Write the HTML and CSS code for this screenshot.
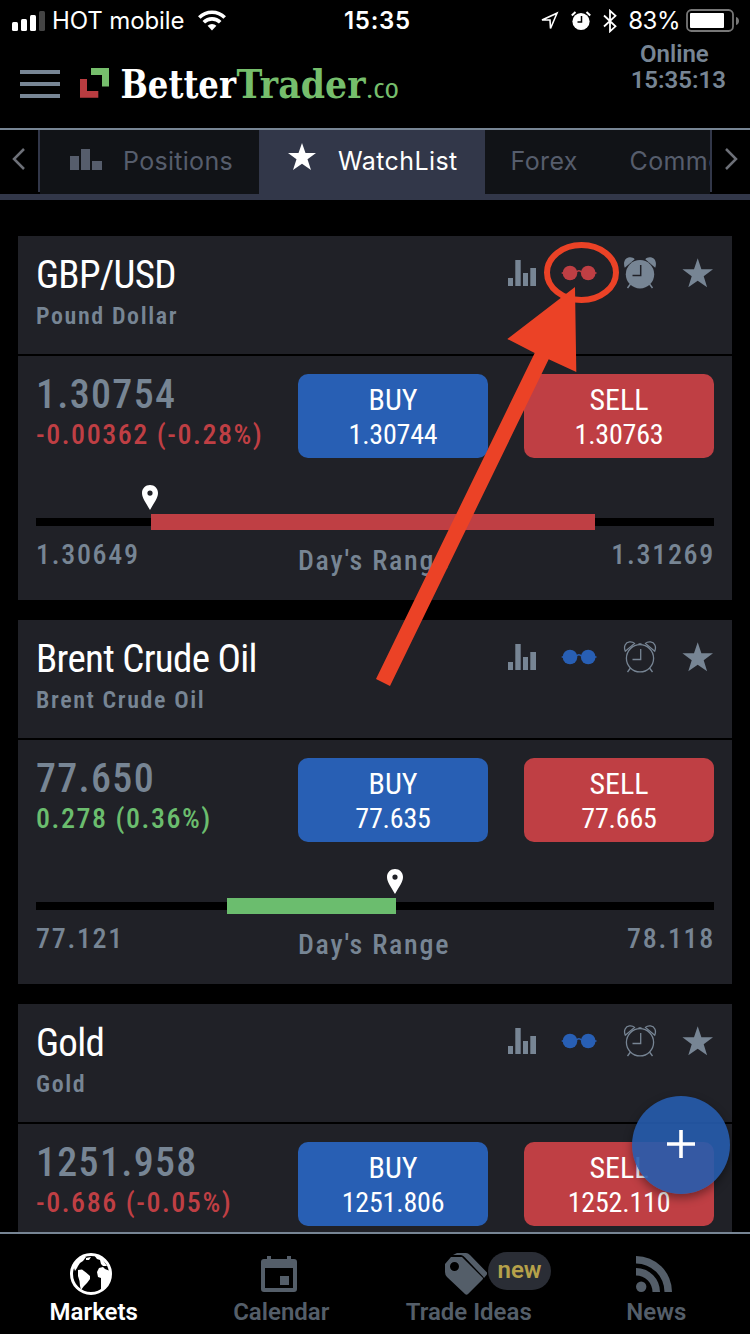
FILE: index.html
```html
<!DOCTYPE html>
<html lang="en">
  <head>
    <meta charset="utf-8">
    <title>BetterTrader.co - WatchList</title>
    <link rel="stylesheet" href="styles.css">
  </head>
  <body>
    <!-- Shared icons -->
    <svg class="defs">
      <symbol id="chart" viewBox="0 0 28 32">
        <path d="M0 21h5v8H0zM7.3 3h5.4v26H7.3zM15 16h5v13h-5zM22.3 11H28v18h-5.7z"/>
      </symbol>
      <symbol id="glasses" viewBox="0 0 36 32">
        <circle cx="9" cy="16" r="7.3"/>
        <circle cx="27.2" cy="16" r="7.3"/>
        <path d="M.7 15.2h3v1.6h-3zM32.5 15.2h3v1.6h-3z"/>
        <path d="M15.2 15.2q2.700-3 5.500 0" fill="none" stroke="currentColor" stroke-width="1.5"/>
      </symbol>
      <symbol id="alarm" viewBox="0 0 34 32">
        <g fill="none" stroke="currentColor" stroke-width="1.3">
          <circle cx="17" cy="17.3" r="13.6"/>
          <path d="M2.3 10.3C.3 5.5 2.5 1.3 6.5.9c2.200-.2 4 .5 5 1.600zM31.7 10.3c2-4.800-.2-9-4.200-9.400-2.200-.2-4 .5-5 1.600z"/>
          <path d="M7.5 27l-3 4M26.5 27l3 4M15.5 3h3"/>
          <path d="M17.7 8v10.5H9.5"/>
        </g>
      </symbol>
      <symbol id="alarm-on" viewBox="0 0 34 32">
        <circle cx="17" cy="17.3" r="14.2"/>
        <path d="M1.8 10.8C-.2 5.500 2 .7 6.500.3c2.200-.2 4 .5 5.200 1.900zM32.2 10.8c2-5.300-.2-10.100-4.700-10.500-2.200-.2-4 .5-5.200 1.900z"/>
        <path d="M7.5 27l-3 4M26.5 27l3 4" stroke="currentColor" stroke-width="1.5"/>
        <path d="M17.7 8v10.5H9.5" fill="none" stroke="#202127" stroke-width="1.5"/>
      </symbol>
      <symbol id="star" viewBox="0 0 32 32">
        <path d="M15.7 1.3l3.700 10.900 11.600.1-9.300 7 3.400 11-9.400-6.600-9.400 6.600 3.400-11-9.300-7 11.600-.1z"/>
      </symbol>
      <symbol id="pin" viewBox="0 0 16 25">
        <path fill-rule="evenodd" d="M8 0c4.500 0 8 3.400 8 8 0 5-4 10-8 17C4 18 0 13 0 8c0-4.600 3.500-8 8-8zm0 5.500a2.600 2.600 0 1 0 0 5.200 2.600 2.600 0 0 0 0-5.200z"/>
      </symbol>
    </svg>

    <div class="statusBar">
      <svg class="signal" width="34" height="20">
        <rect x="0" y="11" width="6" height="9" rx="1.5"/>
        <rect x="9" y="8" width="6" height="12" rx="1.5"/>
        <rect x="18" y="4" width="6" height="16" rx="1.5"/>
        <rect x="27" y="0" width="6" height="20" rx="1.5" fill="#444"/>
      </svg>
      <span class="carrier">HOT mobile</span>
      <svg class="wifi" width="28" height="21" viewBox="0 0 28 21">
        <g fill="none" stroke="#fff" stroke-width="3.6">
          <path d="M1.3 7.5a18 18 0 0 1 25.400 0"/>
          <path d="M5.8 12.3a11.600 11.600 0 0 1 16.400 0"/>
        </g>
        <path d="M14 20.5l-4.400-4.800a6.300 6.300 0 0 1 8.800 0z"/>
      </svg>
      <span class="clock">15:35</span>
      <div class="statusRight">
        <svg width="20" height="20" viewBox="0 0 20 20">
          <path d="M3 9L18 2.2 11.5 17.5 11 9z" fill="none" stroke="#fff" stroke-width="1.6"/>
        </svg>
        <svg width="20" height="20" viewBox="0 0 20 20">
          <circle cx="10" cy="10.5" r="8.6"/>
          <path d="M.8 4.5L4.5 1M19.2 4.5L15.5 1" stroke="#fff" stroke-width="2"/>
          <path d="M10.5 5v6H6.5" fill="none" stroke="#000" stroke-width="1.5"/>
        </svg>
        <svg width="14" height="24" viewBox="0 0 14 24">
          <path d="M1 6.5l11.500 10.800L7 22.300V1.800l5.500 5L1 17.500" fill="none" stroke="#fff" stroke-width="1.8"/>
        </svg>
        <span class="percent">83%</span>
        <svg class="battery" width="54" height="24" viewBox="0 0 54 24">
          <rect x="1" y="1" width="46" height="21" rx="4.5" fill="none" stroke="#777" stroke-width="1.8"/>
          <rect x="4" y="4" width="34" height="15" rx="1"/>
          <path d="M50 8c4 1 4 7 0 8z" fill="#777"/>
        </svg>
      </div>
    </div>

    <div class="header">
      <div class="burger"><i></i><i></i><i></i></div>
      <svg class="logo" width="330" height="50" viewBox="0 0 330 50">
        <path d="M11 4h18v18.5h-7V11H11z" fill="#76be6c"/>
        <path d="M0 15h7v12h11.300v6.700H0z" fill="#b93c40"/>
        <text class="logoName" x="40.5" y="33.5" textLength="115.5" lengthAdjust="spacingAndGlyphs">Better</text>
        <text class="logoName green" x="156.5" y="33.5" textLength="129" lengthAdjust="spacingAndGlyphs">Trader</text>
        <text class="logoCo green" x="286" y="33.5" textLength="33" lengthAdjust="spacingAndGlyphs">.co</text>
      </svg>
      <div class="online">
        <div class="state">Online</div>
        <div>15:35:13</div>
      </div>
    </div>

    <div class="tabs">
      <div class="arrow left">
        <svg width="16" height="24"><path d="M12 2L2 12l10 10"/></svg>
      </div>
      <div class="tabList">
        <div class="tab positions">
          <svg width="32" height="21"><path d="M0 7h9v14H0zM11 0h9v21h-9zM22 12h10v9H22z"/></svg>
          <span>Positions</span>
        </div>
        <div class="tab watchlist active">
          <svg width="28" height="28" viewBox="0 0 28 28"><path d="M14 0l3.500 10H28l-8.500 6.300L23 27l-9-6.300L5 27l3.500-10.700L0 10h10.500z"/></svg>
          <span>WatchList</span>
        </div>
        <div class="tab forex"><span>Forex</span></div>
        <div class="tab"><span>Commodities</span></div>
      </div>
      <div class="arrow right">
        <svg width="16" height="24"><path d="M2 2l10 10L2 22"/></svg>
      </div>
    </div>

    <div class="list">
      <div class="card">
        <div class="cardHead">
          <div>
            <div class="title">GBP/USD</div>
            <div class="subtitle">Pound Dollar</div>
          </div>
          <div class="icons">
            <svg width="28" height="32"><use href="#chart"/></svg>
            <svg class="red" width="36" height="32"><use href="#glasses"/></svg>
            <svg width="34" height="32"><use href="#alarm-on"/></svg>
            <svg width="32" height="32"><use href="#star"/></svg>
          </div>
        </div>
        <div class="cardBody">
          <div class="quote">
            <div class="prices">
              <div class="price">1.30754</div>
              <div class="change down">-0.00362 (-0.28%)</div>
            </div>
            <div class="btn buy"><span class="action">BUY</span><span>1.30744</span></div>
            <div class="btn sell"><span class="action">SELL</span><span>1.30763</span></div>
          </div>
          <div class="range">
            <div class="bar downBar" style="left: 115px; width: 444px"></div>
            <svg class="pin" style="left: 106px" width="16" height="25"><use href="#pin"/></svg>
          </div>
          <div class="labels"><span>1.30649</span><span class="mid">Day's Range</span><span class="max">1.31269</span></div>
        </div>
      </div>

      <div class="card">
        <div class="cardHead">
          <div>
            <div class="title">Brent Crude Oil</div>
            <div class="subtitle">Brent Crude Oil</div>
          </div>
          <div class="icons">
            <svg width="28" height="32"><use href="#chart"/></svg>
            <svg class="blue" width="36" height="32"><use href="#glasses"/></svg>
            <svg width="34" height="32"><use href="#alarm"/></svg>
            <svg width="32" height="32"><use href="#star"/></svg>
          </div>
        </div>
        <div class="cardBody">
          <div class="quote">
            <div class="prices">
              <div class="price">77.650</div>
              <div class="change up">0.278 (0.36%)</div>
            </div>
            <div class="btn buy"><span class="action">BUY</span><span>77.635</span></div>
            <div class="btn sell"><span class="action">SELL</span><span>77.665</span></div>
          </div>
          <div class="range">
            <div class="bar upBar" style="left: 191px; width: 169px"></div>
            <svg class="pin" style="left: 351px" width="16" height="25"><use href="#pin"/></svg>
          </div>
          <div class="labels"><span>77.121</span><span class="mid">Day's Range</span><span class="max">78.118</span></div>
        </div>
      </div>

      <div class="card">
        <div class="cardHead">
          <div>
            <div class="title">Gold</div>
            <div class="subtitle">Gold</div>
          </div>
          <div class="icons">
            <svg width="28" height="32"><use href="#chart"/></svg>
            <svg class="blue" width="36" height="32"><use href="#glasses"/></svg>
            <svg width="34" height="32"><use href="#alarm"/></svg>
            <svg width="32" height="32"><use href="#star"/></svg>
          </div>
        </div>
        <div class="cardBody">
          <div class="quote">
            <div class="prices">
              <div class="price">1251.958</div>
              <div class="change down">-0.686 (-0.05%)</div>
            </div>
            <div class="btn buy"><span class="action">BUY</span><span>1251.806</span></div>
            <div class="btn sell"><span class="action">SELL</span><span>1252.110</span></div>
          </div>
        </div>
      </div>
    </div>

    <div class="footer">
      <div class="navItem active">
        <svg width="42" height="42" viewBox="0 0 42 42">
          <circle cx="21" cy="21" r="19.5" fill="none" stroke="#fff" stroke-width="3"/>
          <path d="M8 17l4-.5 4 3 4 3.500v3l-3 4-3 3-3 4-1-4-.5-5L8 23z"/>
          <path d="M27 19l2-4 4-1 2 2 5 2v8l-5 10-4 .5V25l-3-1z"/>
          <path d="M2 18l3-9 6-6 5 1-3 4-3 2-2 3-1 2-2 3-1-3z"/>
          <path d="M16 5l5-1-2 3-3 0zM24 2l7 2 6 9-4 0-2-2-1-4-3-1z"/>
        </svg>
        <span>Markets</span>
      </div>
      <div class="navItem">
        <svg width="42" height="42" viewBox="0 0 42 42">
          <path fill-rule="evenodd" d="M9 3h4v3h16V3h4v3h3q3 0 3 3v27q0 3-3 3H6q-3 0-3-3V9q0-3 3-3h3zM7 15v20h28V15zM22 23h9v9h-9z"/>
        </svg>
        <span>Calendar</span>
      </div>
      <div class="navItem">
        <svg width="42" height="42" viewBox="0 0 42 42">
          <path fill-rule="evenodd" d="M6 4h11l20.500 20.500q1 1 0 2L23 41q-1.500 1.500-3 0L2 24Q0 22 0 19v-8zM9.500 9a4.500 4.500 0 1 0 0 9 4.500 4.500 0 0 0 0-9z"/>
          <path d="M8 2l4-2h9q2 0 4 2l16.500 17q1.500 1.500 0 3L39 25l-1-1.500L20 4.500Q18 2 16 2z"/>
        </svg>
        <span>Trade Ideas</span>
        <b class="new">new</b>
      </div>
      <div class="navItem">
        <svg width="42" height="42" viewBox="0 0 42 42">
          <circle cx="8.2" cy="33.8" r="5.2"/>
          <path d="M3 15a24 24 0 0 1 24 24h-7.500A16.500 16.500 0 0 0 3 22.500zM3 3a36 36 0 0 1 36 36h-7.500A28.500 28.500 0 0 0 3 10.500z"/>
        </svg>
        <span>News</span>
      </div>
    </div>

    <div class="fab">
      <svg width="28" height="28"><path d="M0 12.2h12.200V0h3.600v12.200H28v3.600H15.800V28h-3.600V15.800H0z"/></svg>
    </div>

    <!-- Points at the glasses icon -->
    <svg class="pointer" width="750" height="1334">
      <ellipse cx="581.5" cy="272.5" rx="34.5" ry="27.5" fill="none" stroke="#eb4226" stroke-width="6"/>
      <path fill="#eb4226" d="M575 287l1.300 85-27.600-12.700L390 686l-14-7 158.700-326-27.400-14z"/>
    </svg>
  </body>
</html>
```
FILE: styles.css
```css
* {
  box-sizing: border-box;
}

body {
  margin: 0;
  width: 750px;
  height: 1334px;
  overflow: hidden;
  position: relative;
  display: flex;
  flex-direction: column;
  background-color: #000;
  color: #778594;
  font-family: 'Roboto Condensed', Roboto, sans-serif;
  font-stretch: 75%;
  white-space: nowrap;
}

svg {
  display: block;
  flex: none;
  fill: currentColor;
}

.defs {
  position: absolute;
  width: 0;
  height: 0;
}

/* Phone status bar */
.statusBar {
  height: 40px;
  padding: 1px 10px 0 12px;
  display: grid;
  grid-template-columns: 40px 146px 28px 1fr auto;
  align-items: center;
  color: #fff;
  font-family: Inter, sans-serif;
  font-size: 24px;
  line-height: 39px;
}

.carrier {
  letter-spacing: -0.1px;
}

.clock {
  font-weight: 600;
  letter-spacing: 0.7px;
  padding-left: 118px;
}

.statusRight {
  display: flex;
  align-items: center;
}

.statusRight svg + svg {
  margin-left: 12px;
}

.percent {
  margin: 0 6px 0 11px;
  letter-spacing: -0.5px;
}

/* Logo row */
.header {
  height: 88px;
  padding: 0 24px 0 20px;
  display: flex;
  align-items: flex-start;
}

.burger {
  width: 40px;
  margin-top: 30px;
}

.burger i {
  display: block;
  height: 4px;
  margin-bottom: 8px;
  background-color: #778594;
}

.logo {
  margin: 24px 0 0 20px;
  overflow: visible;
  fill: #fff;
}

.logoName {
  font-family: 'DejaVu Serif', serif;
  font-size: 39px;
  font-stretch: normal;
  font-weight: bold;
}

.logoCo {
  font-family: 'Open Sans', sans-serif;
  font-size: 27px;
}

.green {
  fill: #76be6c;
}

.online {
  margin: 1px 0 0 auto;
  text-align: center;
  font-family: Roboto, sans-serif;
  font-size: 24px;
  font-stretch: normal;
  font-weight: 600;
  line-height: 26px;
}

.state {
  padding-right: 8px;
}

/* Tabs */
.tabs {
  height: 72px;
  display: flex;
  border-top: 2px solid #778594;
  border-bottom: 6px solid #323749;
  font-family: Inter, sans-serif;
  font-size: 25px;
  letter-spacing: 0.4px;
}

.arrow {
  flex: none;
  width: 40px;
  height: 62px;
  display: flex;
  align-items: center;
}

.arrow svg {
  fill: none;
  stroke: #6d7078;
  stroke-width: 2.5px;
}

.left {
  border-right: 2px solid #323749;
  padding: 0 0 4px 12px;
}

.right {
  border-left: 2px solid #323749;
  padding: 0 0 4px 12px;
}

.tabList {
  flex: 1;
  display: flex;
  overflow: hidden;
  background-color: #111317;
  color: #565d6c;
}

.tab {
  flex: none;
  display: flex;
  align-items: center;
  padding-bottom: 2px;
}

.positions {
  width: 219px;
  padding-left: 30px;
  gap: 21px;
  letter-spacing: 0.3px;
}

.positions svg {
  margin-bottom: 3px;
}

.watchlist {
  width: 226px;
  padding-left: 29px;
  gap: 22px;
}

.watchlist svg {
  margin-bottom: 8px;
}

.forex {
  width: 144.5px;
  padding-left: 25.5px;
}

.tab.active {
  background-color: #323749;
  color: #fff;
}

/* Watch list */
.list {
  flex: 1;
  overflow: hidden;
  padding: 36px 18px 0;
}

.card {
  height: 364px;
  margin-bottom: 20px;
  background-color: #202127;
}

.cardHead {
  height: 120px;
  padding: 15px 18px 0;
  display: flex;
  justify-content: space-between;
  border-bottom: 2px solid #000;
}

.title {
  color: #fff;
  font-size: 39px;
  letter-spacing: -0.7px;
  line-height: 48px;
}

.subtitle {
  margin-top: 3px;
  font-size: 24px;
  font-weight: 600;
  letter-spacing: 1.6px;
  line-height: 28px;
}

.icons {
  width: 206px;
  margin-top: 6px;
  display: flex;
  justify-content: space-between;
  align-items: flex-start;
}

.red {
  color: #bf3f44;
}

.blue {
  color: #285fb4;
}

.cardBody {
  padding: 18px;
}

.quote {
  display: grid;
  grid-template-columns: 226px 190px 190px;
  column-gap: 36px;
  height: 84px;
}

.prices {
  padding-top: 1px;
}

.price {
  font-size: 40px;
  font-weight: 500;
  letter-spacing: 1.3px;
  line-height: 40px;
}

.change {
  font-size: 28px;
  font-weight: 500;
  letter-spacing: 1.55px;
  line-height: 40px;
}

.down {
  color: #bf3f44;
}

.up {
  color: #6bbd6e;
}

.btn {
  display: flex;
  flex-direction: column;
  align-items: center;
  padding-top: 9px;
  border-radius: 10px;
  color: #fff;
  font-size: 28px;
  letter-spacing: -0.2px;
  line-height: 36px;
}

.action {
  font-size: 30px;
  letter-spacing: 0;
  line-height: 34px;
}

.buy {
  background-color: #285fb4;
}

.sell {
  background-color: #bf3f44;
}

.range {
  position: relative;
  height: 8px;
  margin-top: 60px;
  background-color: #000;
}

.bar {
  position: absolute;
  top: -4px;
  height: 16px;
}

.downBar {
  background-color: #bf3f44;
}

.upBar {
  background-color: #6bbd6e;
}

.pin {
  position: absolute;
  top: -33px;
  color: #fff;
}

.labels {
  margin-top: 15px;
  display: grid;
  grid-template-columns: 262px 1fr auto;
  font-size: 28px;
  font-weight: 500;
  letter-spacing: 1.7px;
  line-height: 28px;
}

.mid {
  padding-top: 6px;
}

.max {
  margin-right: -1px;
}

/* Bottom navigation */
.footer {
  height: 102px;
  display: grid;
  grid-template-columns: repeat(4, 1fr);
  border-top: 2px solid #778594;
  color: #545e69;
  font-family: Roboto, sans-serif;
  font-size: 24px;
  font-stretch: normal;
  font-weight: 600;
  line-height: 28px;
}

.navItem {
  position: relative;
  display: flex;
  flex-direction: column;
  align-items: center;
  padding-top: 19px;
}

.navItem svg {
  margin: 0 5px 3px 0;
}

.navItem.active {
  color: #fff;
}

.new {
  position: absolute;
  top: 18px;
  left: 113px;
  width: 63px;
  height: 38px;
  border-radius: 19px;
  background-color: #2a2d35;
  color: #b6a14a;
  font-weight: 600;
  line-height: 36px;
  text-align: center;
}

/* Floating add button */
.fab {
  position: absolute;
  right: 20px;
  bottom: 140px;
  width: 98px;
  height: 98px;
  padding-bottom: 3px;
  display: flex;
  align-items: center;
  justify-content: center;
  border-radius: 50%;
  background-color: rgba(38, 92, 174, 0.9);
  box-shadow: 0 4px 10px rgba(0, 0, 0, 0.4);
  color: #fff;
}

.pointer {
  position: absolute;
  top: 0;
  left: 0;
}
```
